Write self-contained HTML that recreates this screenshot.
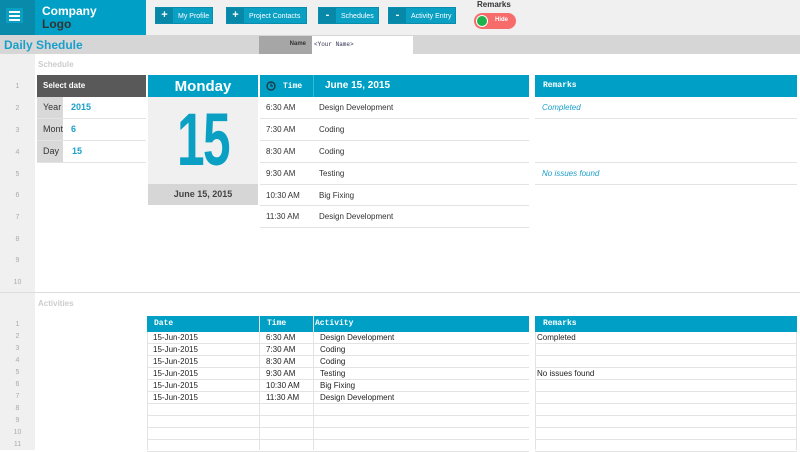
<!DOCTYPE html>
<html><head><meta charset="utf-8"><style>
*{margin:0;padding:0;box-sizing:border-box}
body{width:800px;height:450px;overflow:hidden;background:#fff;font-family:"Liberation Sans",sans-serif;position:relative;color:#333}
.a{position:absolute}
.btn{position:absolute;top:7px;height:17px;background:#0aa0c4;color:#fff;font-size:7px;line-height:17px;border:1px solid #0a8cae}
.btn b{position:absolute;left:0;top:0;width:17px;height:15px;background:#0788a8;text-align:center;font-size:11px;line-height:15px}
.btn span{position:absolute;left:22px}
.rn{position:absolute;left:0;width:35px;text-align:center;font-size:7px;color:#aaa}
.hd{background:#00a0c6;color:#fff;font-weight:bold}
.row{position:absolute;border-bottom:1px solid #e3e3e3;font-size:8px;line-height:21px}
.br{position:absolute;height:12px;border-bottom:1px solid #e3e3e3;font-size:8px;line-height:11px;color:#222}
</style></head><body>
<div class="a" style="left:0;top:0;width:800px;height:35px;background:#f0f0f0"></div>
<div class="a" style="left:0;top:0;width:146px;height:35px;background:#00a0c6"></div>
<div class="a" style="left:0;top:0;width:35px;height:35px;background:#0a8aab"></div>
<div class="a" style="left:6px;top:8px;width:17px;height:15px;background:#0aa0c4"></div>
<div class="a" style="left:9px;top:11px;width:11px;height:2px;background:#fff;box-shadow:0 4px 0 #fff,0 8px 0 #fff"></div>
<div class="a" style="left:42px;top:4px;font-size:12px;font-weight:bold;color:#fff">Company</div>
<div class="a" style="left:42px;top:17px;font-size:12px;font-weight:bold;color:#333">Logo</div>
<div class="btn" style="left:155px;width:58px"><b>+</b><span>My Profile</span></div>
<div class="btn" style="left:226px;width:81px"><b>+</b><span>Project Contacts</span></div>
<div class="btn" style="left:318px;width:61px"><b>-</b><span>Schedules</span></div>
<div class="btn" style="left:388px;width:68px"><b>-</b><span>Activity Entry</span></div>
<div class="a" style="left:477px;top:0;font-size:8px;font-weight:bold;color:#333">Remarks</div>
<div class="a" style="left:474px;top:13px;width:42px;height:16px;border-radius:8px;background:#f76b6b"></div>
<div class="a" style="left:476px;top:15px;width:12px;height:12px;border-radius:6px;background:#1db34a;border:1px solid #fff"></div>
<div class="a" style="left:495px;top:17px;font-size:6px;color:#fff;font-weight:bold">Hide</div>
<div class="a" style="left:0;top:35px;width:800px;height:19px;background:#d6d6d6"></div>
<div class="a" style="left:4px;top:38px;font-size:12px;font-weight:bold;color:#1a9fcb">Daily Shedule</div>
<div class="a" style="left:259px;top:36px;width:53px;height:18px;background:#a6a6a6;font-size:6px;font-weight:bold;text-align:right;padding-right:6px;line-height:16px;color:#333">Name</div>
<div class="a" style="left:312px;top:36px;width:101px;height:18px;background:#fff;font-size:6px;line-height:17px;padding-left:2px;font-family:'Liberation Mono',monospace;color:#335">&lt;Your Name&gt;</div>
<div class="a" style="left:0;top:54px;width:35px;height:396px;background:#f0f0f0"></div>
<div class="a" style="left:38px;top:60px;font-size:8px;font-weight:bold;color:#ccc">Schedule</div>
<div class="rn" style="top:83px">1</div><div class="rn" style="top:105px">2</div><div class="rn" style="top:127px">3</div><div class="rn" style="top:149px">4</div><div class="rn" style="top:171px">5</div><div class="rn" style="top:192px">6</div><div class="rn" style="top:214px">7</div><div class="rn" style="top:236px">8</div><div class="rn" style="top:257px">9</div><div class="rn" style="top:279px">10</div>
<div class="a" style="left:37px;top:75px;width:109px;height:22px;background:#595959;color:#fff;font-size:8px;font-weight:bold;line-height:22px;padding-left:6px">Select date</div>
<div class="a" style="left:37px;top:97px;width:26px;height:66px;background:#d9d9d9"></div>
<div class="row" style="left:37px;top:97px;width:109px;height:22px"><span style="position:absolute;left:6px;font-size:9px">Year</span><b style="position:absolute;left:34px;color:#1a9fcb;font-size:9px">2015</b></div>
<div class="row" style="left:37px;top:119px;width:109px;height:22px"><span style="position:absolute;left:6px;font-size:9px">Mont</span><b style="position:absolute;left:34px;color:#1a9fcb;font-size:9px">6</b></div>
<div class="row" style="left:37px;top:141px;width:109px;height:22px"><span style="position:absolute;left:6px;font-size:9px">Day</span><b style="position:absolute;left:35px;color:#1a9fcb;font-size:9px">15</b></div>
<div class="a hd" style="left:148px;top:75px;width:110px;height:22px;font-size:15px;text-align:center;line-height:23px">Monday</div>
<div class="a" style="left:148px;top:97px;width:110px;height:87px;background:#f0f0f0"></div>
<div class="a" style="left:148px;top:97px;width:110px;height:87px;color:#0aa0c4;font-size:62px;font-weight:bold;text-align:center;line-height:87px;transform:scale(0.8,1.2);letter-spacing:-2px">15</div>
<div class="a" style="left:148px;top:184px;width:110px;height:21px;background:#d6d6d6;font-size:9px;font-weight:bold;text-align:center;line-height:21px;color:#444">June 15, 2015</div>
<div class="a hd" style="left:260px;top:75px;width:269px;height:22px"></div>
<div class="a" style="left:313px;top:75px;width:1px;height:22px;background:#3bb6d4"></div>
<svg class="a" style="left:266px;top:81px" width="10" height="10" viewBox="0 0 10 10"><circle cx="5" cy="5" r="4" fill="none" stroke="#1d3b4a" stroke-width="1.4"/><path d="M5 2.5V5H7" fill="none" stroke="#1d3b4a" stroke-width="1.2"/></svg>
<div class="a" style="left:283px;top:82px;font-size:8px;color:#fff;font-weight:bold;font-family:'Liberation Mono',monospace">Time</div>
<div class="a" style="left:325px;top:80px;font-size:10px;color:#fff;font-weight:bold">June 15, 2015</div>
<div class="row" style="left:260px;top:97px;width:269px;height:22px"><span style="position:absolute;left:6px">6:30 AM</span><span style="position:absolute;left:59px">Design Development</span></div>
<div class="row" style="left:260px;top:119px;width:269px;height:22px"><span style="position:absolute;left:6px">7:30 AM</span><span style="position:absolute;left:59px">Coding</span></div>
<div class="row" style="left:260px;top:141px;width:269px;height:22px"><span style="position:absolute;left:6px">8:30 AM</span><span style="position:absolute;left:59px">Coding</span></div>
<div class="row" style="left:260px;top:163px;width:269px;height:22px"><span style="position:absolute;left:6px">9:30 AM</span><span style="position:absolute;left:59px">Testing</span></div>
<div class="row" style="left:260px;top:185px;width:269px;height:21px"><span style="position:absolute;left:6px">10:30 AM</span><span style="position:absolute;left:59px">Big Fixing</span></div>
<div class="row" style="left:260px;top:206px;width:269px;height:22px"><span style="position:absolute;left:6px">11:30 AM</span><span style="position:absolute;left:59px">Design Development</span></div>
<div class="a hd" style="left:535px;top:75px;width:262px;height:22px;font-size:8px;line-height:22px;padding-left:8px;font-family:'Liberation Mono',monospace">Remarks</div>
<div class="row" style="left:535px;top:97px;width:262px;height:22px;color:#1a9fcb;font-style:italic;padding-left:7px">Completed</div>
<div class="row" style="left:535px;top:141px;width:262px;height:22px"></div>
<div class="row" style="left:535px;top:163px;width:262px;height:22px;color:#1a9fcb;font-style:italic;padding-left:7px">No issues found</div>
<div class="a" style="left:0;top:292px;width:800px;height:1px;background:#ddd"></div>
<div class="a" style="left:38px;top:299px;font-size:8px;font-weight:bold;color:#ccc">Activities</div>
<div class="rn" style="top:321px">1</div><div class="rn" style="top:333px">2</div><div class="rn" style="top:345px">3</div><div class="rn" style="top:357px">4</div><div class="rn" style="top:369px">5</div><div class="rn" style="top:381px">6</div><div class="rn" style="top:393px">7</div><div class="rn" style="top:405px">8</div><div class="rn" style="top:417px">9</div><div class="rn" style="top:429px">10</div><div class="rn" style="top:441px">11</div>
<div class="a hd" style="left:147px;top:316px;width:382px;height:16px;font-size:8px;line-height:16px;font-family:'Liberation Mono',monospace"><span style="position:absolute;left:7px">Date</span><span style="position:absolute;left:120px">Time</span><span style="position:absolute;left:168px">Activity</span></div>
<div class="a" style="left:259px;top:316px;width:1px;height:134px;background:#e3e3e3"></div>
<div class="a" style="left:313px;top:316px;width:1px;height:134px;background:#e3e3e3"></div>
<div class="a" style="left:147px;top:332px;width:1px;height:118px;background:#e3e3e3"></div>
<div class="a hd" style="left:535px;top:316px;width:262px;height:16px;font-size:8px;line-height:16px;padding-left:8px;font-family:'Liberation Mono',monospace">Remarks</div>
<div class="a" style="left:535px;top:332px;width:1px;height:118px;background:#e3e3e3"></div>
<div class="a" style="left:796px;top:332px;width:1px;height:118px;background:#e3e3e3"></div>
<div class="br" style="left:147px;top:332px;width:382px"><span style="position:absolute;left:6px">15-Jun-2015</span><span style="position:absolute;left:119px">6:30 AM</span><span style="position:absolute;left:173px">Design Development</span></div>
<div class="br" style="left:147px;top:344px;width:382px"><span style="position:absolute;left:6px">15-Jun-2015</span><span style="position:absolute;left:119px">7:30 AM</span><span style="position:absolute;left:173px">Coding</span></div>
<div class="br" style="left:147px;top:356px;width:382px"><span style="position:absolute;left:6px">15-Jun-2015</span><span style="position:absolute;left:119px">8:30 AM</span><span style="position:absolute;left:173px">Coding</span></div>
<div class="br" style="left:147px;top:368px;width:382px"><span style="position:absolute;left:6px">15-Jun-2015</span><span style="position:absolute;left:119px">9:30 AM</span><span style="position:absolute;left:173px">Testing</span></div>
<div class="br" style="left:147px;top:380px;width:382px"><span style="position:absolute;left:6px">15-Jun-2015</span><span style="position:absolute;left:119px">10:30 AM</span><span style="position:absolute;left:173px">Big Fixing</span></div>
<div class="br" style="left:147px;top:392px;width:382px"><span style="position:absolute;left:6px">15-Jun-2015</span><span style="position:absolute;left:119px">11:30 AM</span><span style="position:absolute;left:173px">Design Development</span></div>
<div class="br" style="left:147px;top:404px;width:382px"></div><div class="br" style="left:147px;top:416px;width:382px"></div><div class="br" style="left:147px;top:428px;width:382px"></div><div class="br" style="left:147px;top:440px;width:382px"></div>
<div class="br" style="left:535px;top:332px;width:262px;padding-left:2px">Completed</div>
<div class="br" style="left:535px;top:344px;width:262px"></div><div class="br" style="left:535px;top:356px;width:262px"></div>
<div class="br" style="left:535px;top:368px;width:262px;padding-left:2px">No issues found</div>
<div class="br" style="left:535px;top:380px;width:262px"></div><div class="br" style="left:535px;top:392px;width:262px"></div><div class="br" style="left:535px;top:404px;width:262px"></div><div class="br" style="left:535px;top:416px;width:262px"></div><div class="br" style="left:535px;top:428px;width:262px"></div><div class="br" style="left:535px;top:440px;width:262px"></div>
</body></html>
